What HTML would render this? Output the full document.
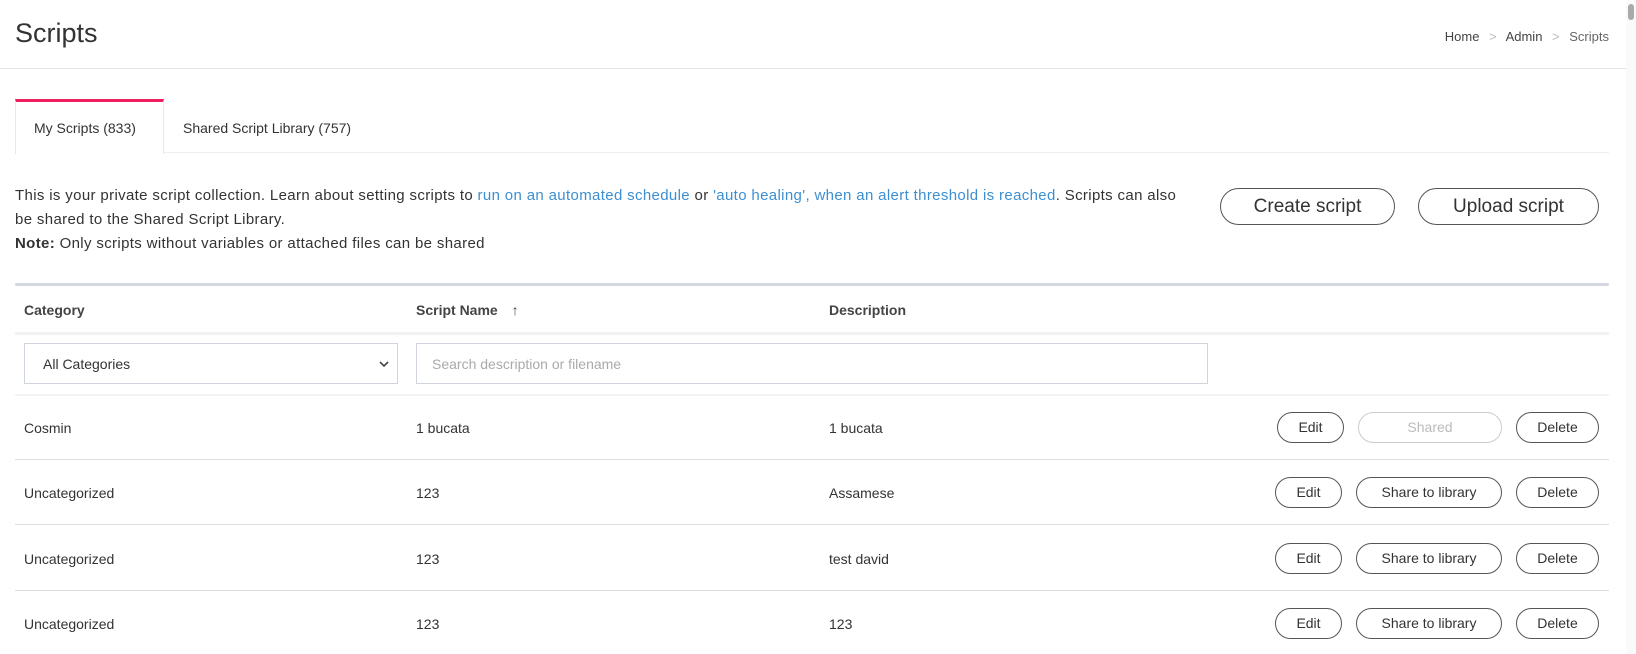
<!DOCTYPE html>
<html><head><meta charset="utf-8"><style>
*{box-sizing:border-box;margin:0;padding:0}
body{width:1636px;height:654px;overflow:hidden;background:#fff;font-family:"Liberation Sans",sans-serif;color:#333;position:relative}
.abs{position:absolute;white-space:nowrap}
a{color:#3d8fd1;text-decoration:none}
.btn{position:absolute;border:1px solid #555;border-radius:16px;background:#fff;font-size:14px;color:#333;text-align:center;line-height:29px;height:31px}
.big{height:37px;border-radius:19px;font-size:19px;line-height:35px}
.hl{position:absolute;left:15px;width:1594px;height:1px;background:#ddd}
.cell{position:absolute;font-size:14px;color:#333}
</style></head><body>
<div class="abs" style="left:15px;top:18px;font-size:27px;color:#333">Scripts</div>
<div class="abs" style="right:27px;top:29px;font-size:13px;color:#444">Home <span style="color:#bbb;margin:0 6px">&gt;</span> Admin <span style="color:#bbb;margin:0 6px">&gt;</span> <span style="color:#666">Scripts</span></div>
<div style="position:absolute;left:0;top:68px;width:1626px;height:1px;background:#e4e4e4"></div>
<div style="position:absolute;left:15px;top:99px;width:149px;height:55px;border-top:3px solid #ee1d5f;border-left:1px solid #e8e8e8;border-right:1px solid #e8e8e8;background:#fff;z-index:2"></div>
<div class="abs" style="left:34px;top:120px;font-size:14px;z-index:3">My Scripts (833)</div>
<div class="abs" style="left:183px;top:120px;font-size:14px">Shared Script Library (757)</div>
<div style="position:absolute;left:15px;top:152px;width:1594px;height:1px;background:#eee"></div>
<div class="abs" style="left:15px;top:184px;font-size:15px;letter-spacing:0.35px;line-height:24px;color:#333">This is your private script collection. Learn about setting scripts to <a>run on an automated schedule</a> or <a>'auto healing', when an alert threshold is reached</a>. Scripts can also<br>be shared to the Shared Script Library.<br><b>Note:</b> Only scripts without variables or attached files can be shared</div>
<div class="btn big" style="left:1220px;top:188px;width:175px">Create script</div>
<div class="btn big" style="left:1418px;top:188px;width:181px">Upload script</div>
<div style="position:absolute;left:15px;top:283px;width:1594px;height:3px;background:#d5d8e0;border-radius:2px"></div>
<div class="cell" style="left:24px;top:302px;font-weight:bold;color:#444">Category</div>
<div class="cell" style="left:416px;top:302px;font-weight:bold;color:#444">Script Name <span style="margin-left:10px;font-weight:normal">&#8593;</span></div>
<div class="cell" style="left:829px;top:302px;font-weight:bold;color:#444">Description</div>
<div style="position:absolute;left:15px;top:332px;width:1594px;height:3px;background:#f2f2f2"></div>
<div style="position:absolute;left:24px;top:343px;width:374px;height:41px;border:1px solid #d0d4dc"></div>
<div class="cell" style="left:43px;top:356px">All Categories</div>
<svg style="position:absolute;left:379px;top:360px" width="10" height="8"><path d="M1 2 L5 6 L9 2" stroke="#444" stroke-width="1.6" fill="none"/></svg>
<div style="position:absolute;left:416px;top:343px;width:792px;height:41px;border:1px solid #d0d4dc"></div>
<div class="cell" style="left:432px;top:356px;color:#aaa">Search description or filename</div>
<div style="position:absolute;left:15px;top:394px;width:1594px;height:2px;background:#f2f2f2"></div>

<div class="cell" style="left:24px;top:420px">Cosmin</div>
<div class="cell" style="left:416px;top:420px">1 bucata</div>
<div class="cell" style="left:829px;top:420px">1 bucata</div>
<div class="btn" style="left:1277px;top:412px;width:67px">Edit</div>
<div class="btn" style="left:1358px;top:412px;width:144px;border-color:#ccc;color:#bbb">Shared</div>
<div class="btn" style="left:1516px;top:412px;width:83px">Delete</div>
<div class="hl" style="top:459px"></div>

<div class="cell" style="left:24px;top:485px">Uncategorized</div>
<div class="cell" style="left:416px;top:485px">123</div>
<div class="cell" style="left:829px;top:485px">Assamese</div>
<div class="btn" style="left:1275px;top:477px;width:67px">Edit</div>
<div class="btn" style="left:1356px;top:477px;width:146px">Share to library</div>
<div class="btn" style="left:1516px;top:477px;width:83px">Delete</div>
<div class="hl" style="top:524px"></div>

<div class="cell" style="left:24px;top:551px">Uncategorized</div>
<div class="cell" style="left:416px;top:551px">123</div>
<div class="cell" style="left:829px;top:551px">test david</div>
<div class="btn" style="left:1275px;top:543px;width:67px">Edit</div>
<div class="btn" style="left:1356px;top:543px;width:146px">Share to library</div>
<div class="btn" style="left:1516px;top:543px;width:83px">Delete</div>
<div class="hl" style="top:590px"></div>

<div class="cell" style="left:24px;top:616px">Uncategorized</div>
<div class="cell" style="left:416px;top:616px">123</div>
<div class="cell" style="left:829px;top:616px">123</div>
<div class="btn" style="left:1275px;top:608px;width:67px">Edit</div>
<div class="btn" style="left:1356px;top:608px;width:146px">Share to library</div>
<div class="btn" style="left:1516px;top:608px;width:83px">Delete</div>

<div style="position:absolute;left:1626px;top:0;width:10px;height:654px;background:#fafafa"></div>
<div style="position:absolute;left:1628px;top:4px;width:6px;height:16px;background:#aaa;border-radius:3px"></div>
</body></html>
